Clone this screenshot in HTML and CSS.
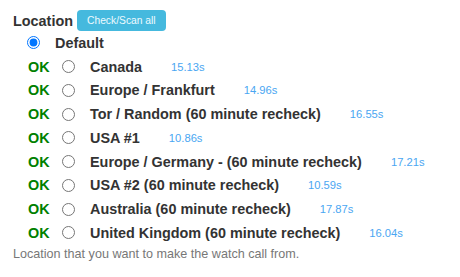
FILE: index.html
```html
<!DOCTYPE html>
<html>
<head>
<meta charset="utf-8">
<link rel="stylesheet" href="styles.css">
</head>
<body>
<div class="field">
  <div class="head">
    <span class="title">Location</span>
    <button class="btn">Check/Scan all</button>
  </div>
  <ul class="list">
    <li class="row default"><input type="radio" name="loc" checked><span class="name">Default</span></li>
    <li class="row"><span class="ok">OK</span><input type="radio" name="loc"><span class="name">Canada</span><span class="time">15.13s</span></li>
    <li class="row"><span class="ok">OK</span><input type="radio" name="loc"><span class="name">Europe / Frankfurt</span><span class="time">14.96s</span></li>
    <li class="row"><span class="ok">OK</span><input type="radio" name="loc"><span class="name">Tor / Random (60 minute recheck)</span><span class="time">16.55s</span></li>
    <li class="row"><span class="ok">OK</span><input type="radio" name="loc"><span class="name">USA #1</span><span class="time">10.86s</span></li>
    <li class="row"><span class="ok">OK</span><input type="radio" name="loc"><span class="name">Europe / Germany - (60 minute recheck)</span><span class="time">17.21s</span></li>
    <li class="row"><span class="ok">OK</span><input type="radio" name="loc"><span class="name">USA #2 (60 minute recheck)</span><span class="time">10.59s</span></li>
    <li class="row"><span class="ok">OK</span><input type="radio" name="loc"><span class="name">Australia (60 minute recheck)</span><span class="time">17.87s</span></li>
    <li class="row"><span class="ok">OK</span><input type="radio" name="loc"><span class="name">United Kingdom (60 minute recheck)</span><span class="time">16.04s</span></li>
  </ul>
  <div class="help">Location that you want to make the watch call from.</div>
</div>
</body>
</html>
```
FILE: styles.css
```css
html, body {
  margin: 0;
  padding: 0;
  background: #fff;
}
body {
  font-family: "Liberation Sans", Arial, sans-serif;
  color: #333;
}
.field {
  padding: 10px 0 0 13px;
}
.head {
  display: flex;
  align-items: center;
  height: 21px;
}
.title {
  font-weight: bold;
  font-size: 14.4px;
  margin-right: 4px;
}
.btn {
  height: 21px;
  padding: 0 10px;
  border: none;
  border-radius: 4px;
  background: #45b9de;
  color: #eefaff;
  font-family: "Liberation Sans", Arial, sans-serif;
  font-size: 10.3px;
}
.list {
  list-style: none;
  margin: 0;
  padding: 0;
}
.row {
  display: flex;
  align-items: center;
  height: 23.75px;
  font-size: 14.4px;
  font-weight: bold;
}
.ok {
  color: #008000;
  width: 21px;
  margin-left: 15px;
}
.row input {
  width: 13px;
  height: 13px;
  margin: 0 0 0 13px;
}
.row.default input {
  margin-left: 14px;
}
.name {
  margin-left: 15px;
}
.time {
  margin-left: 29px;
  font-size: 11.2px;
  font-weight: normal;
  color: #4aa6f2;
}
.help {
  font-size: 12.6px;
  color: #777;
  margin-top: 2px;
}
```
